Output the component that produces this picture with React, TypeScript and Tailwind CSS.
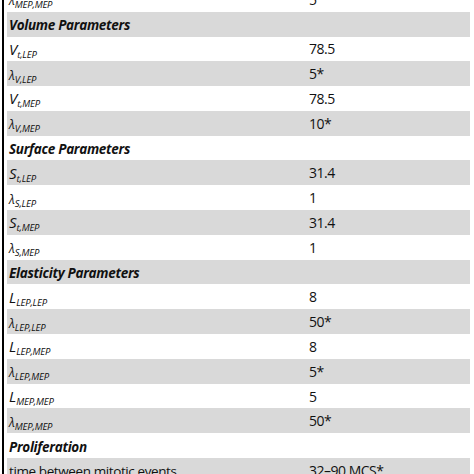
import React from "react";

type Row = { kind: "header" | "sym" | "text"; main?: string; sub?: string; lambda?: boolean; label?: string; value?: string };

const rows: Row[] = [
  { kind: "sym", main: "λ", sub: "MEP,MEP", lambda: true, value: "5" },
  { kind: "header", label: "Volume Parameters" },
  { kind: "sym", main: "V", sub: "t,LEP", value: "78.5" },
  { kind: "sym", main: "λ", sub: "V,LEP", lambda: true, value: "5*" },
  { kind: "sym", main: "V", sub: "t,MEP", value: "78.5" },
  { kind: "sym", main: "λ", sub: "V,MEP", lambda: true, value: "10*" },
  { kind: "header", label: "Surface Parameters" },
  { kind: "sym", main: "S", sub: "t,LEP", value: "31.4" },
  { kind: "sym", main: "λ", sub: "S,LEP", lambda: true, value: "1" },
  { kind: "sym", main: "S", sub: "t,MEP", value: "31.4" },
  { kind: "sym", main: "λ", sub: "S,MEP", lambda: true, value: "1" },
  { kind: "header", label: "Elasticity Parameters" },
  { kind: "sym", main: "L", sub: "LEP,LEP", value: "8" },
  { kind: "sym", main: "λ", sub: "LEP,LEP", lambda: true, value: "50*" },
  { kind: "sym", main: "L", sub: "LEP,MEP", value: "8" },
  { kind: "sym", main: "λ", sub: "LEP,MEP", lambda: true, value: "5*" },
  { kind: "sym", main: "L", sub: "MEP,MEP", value: "5" },
  { kind: "sym", main: "λ", sub: "MEP,MEP", lambda: true, value: "50*" },
  { kind: "header", label: "Proliferation" },
  { kind: "text", label: "time between mitotic events", value: "32–90 MCS*" },
];

export default function App() {
  return (
    <div className="w-[474px] h-[474px] overflow-hidden bg-white text-[#111] font-['Open_Sans',sans-serif]">
      <div className="flex h-full pl-[2px]">
        <div className="w-[2px] bg-black shrink-0" />
        <div className="ml-[3px] w-[463px] -mt-[13.1px]">
          {rows.map((r, i) => (
            <div
              key={i}
              className={`flex items-center h-[24.8px] ${i % 2 === 1 ? "bg-[#d9d9d9]" : "bg-white"}`}
            >
              <div className="w-[302px] pl-[2px] whitespace-nowrap">
                {r.kind === "header" && (
                  <span className="text-[13.5px] font-bold italic tracking-[-0.3px]">{r.label}</span>
                )}
                {r.kind === "text" && <span className="text-[13.5px] tracking-[-0.4px]">{r.label}</span>}
                {r.kind === "sym" && (
                  <span className="italic">
                    <span className={r.lambda ? "text-[12px]" : "text-[15px]"}>{r.main}</span>
                    <span className="text-[9.5px] relative top-[3px] tracking-[-0.2px]">{r.sub}</span>
                  </span>
                )}
              </div>
              <div className="text-[14px] tracking-[-0.5px] whitespace-nowrap">{r.value}</div>
            </div>
          ))}
        </div>
      </div>
    </div>
  );
}
